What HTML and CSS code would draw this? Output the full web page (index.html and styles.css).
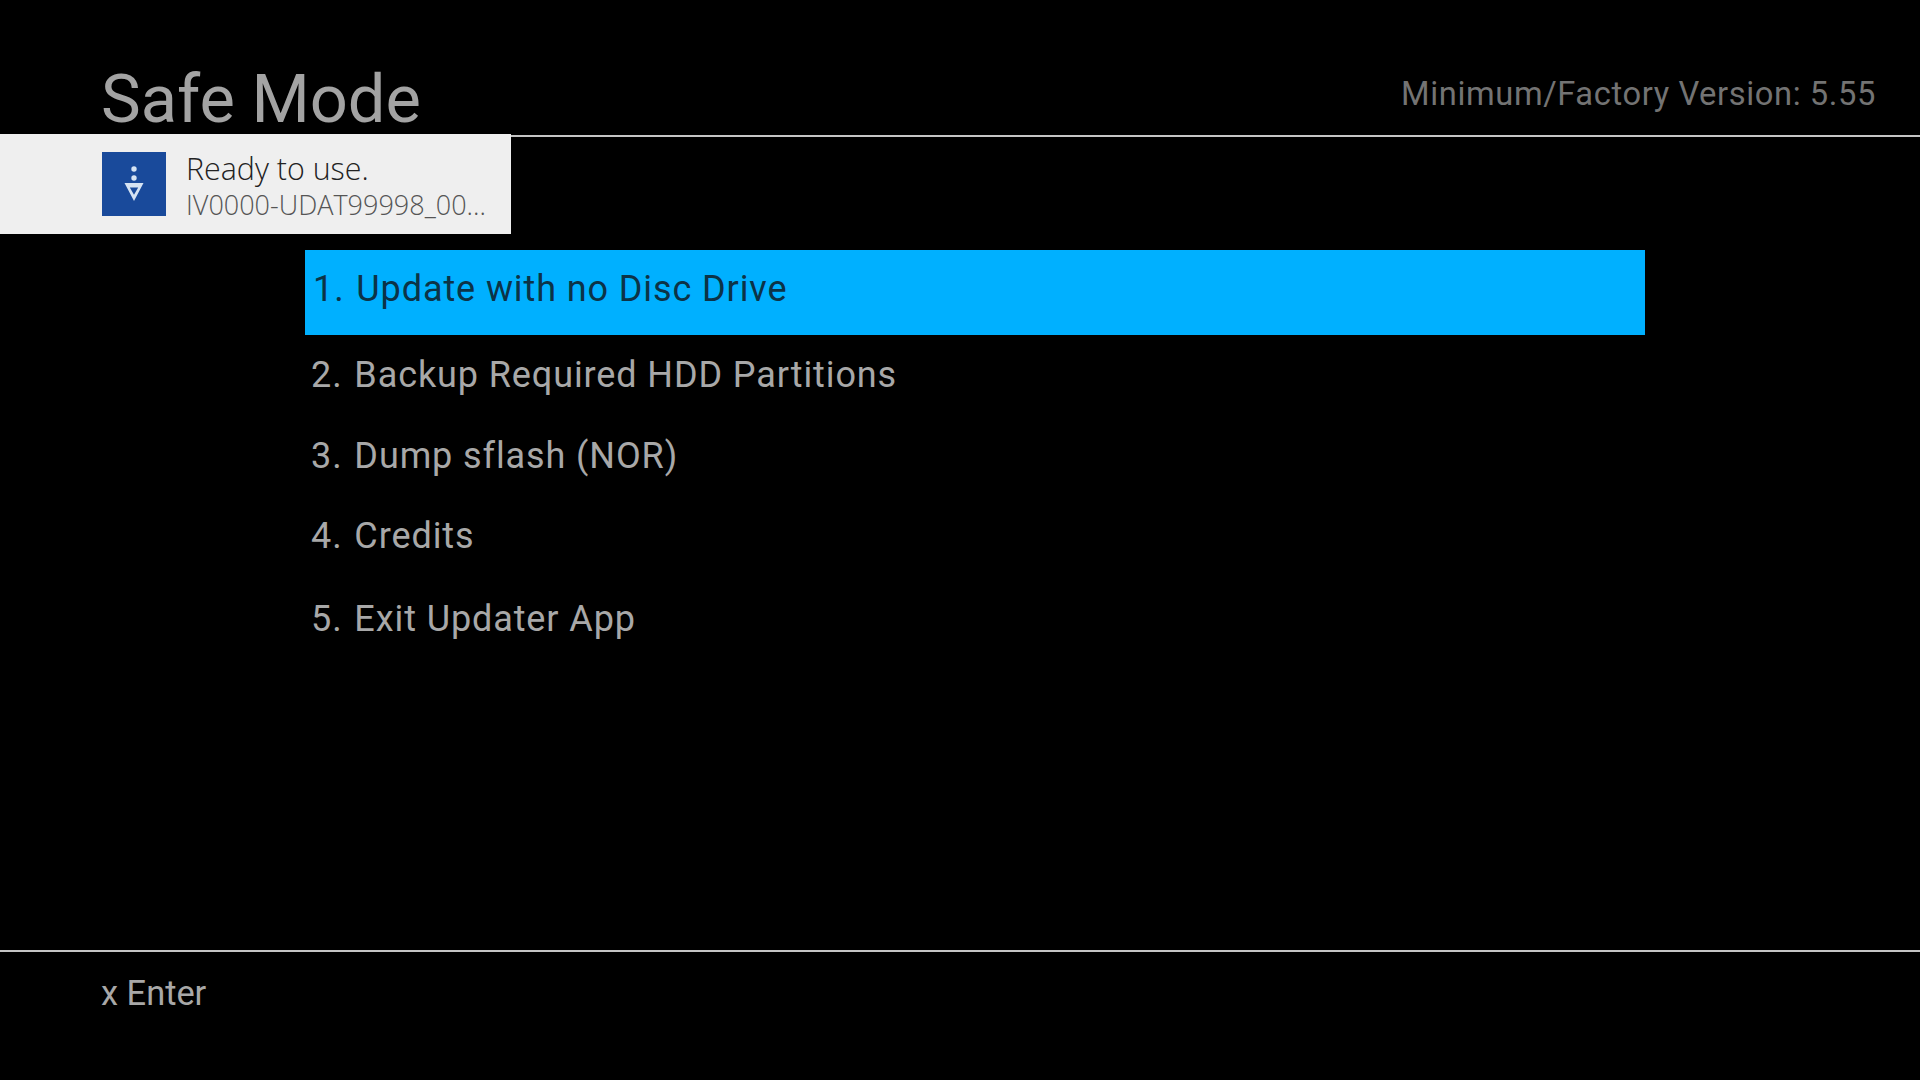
FILE: index.html
```html
<!DOCTYPE html>
<html lang="en">
  <head>
    <meta charset="utf-8">
    <title>Safe Mode</title>
    <link rel="stylesheet" href="styles.css">
  </head>
  <body>
    <div class="screen">
      <div class="header">
        <div class="title">Safe Mode</div>
        <div class="version">Minimum/Factory Version: 5.55</div>
      </div>
      <div class="notice">
        <div class="noticeicon">
          <svg width="64" height="64" viewBox="0 0 64 64">
            <circle cx="32" cy="17" r="2.7" fill="#d5e3f3"/>
            <circle cx="32" cy="26" r="2.7" fill="#d5e3f3"/>
            <path d="M22.5 31h19L32 49zM27.8 35.4h8.4L32 42.8z" fill="#d5e3f3" fill-rule="evenodd"/>
          </svg>
        </div>
        <div class="noticetext">
          <div class="noticetitle">Ready to use.</div>
          <div class="noticesub">IV0000-UDAT99998_00...</div>
        </div>
      </div>
      <div class="menu">
        <div class="item selected"><span class="num">1.</span> Update with no Disc Drive</div>
        <div class="item"><span class="num">2.</span> Backup Required HDD Partitions</div>
        <div class="item third"><span class="num">3.</span> Dump sflash (NOR)</div>
        <div class="item"><span class="num">4.</span> Credits</div>
        <div class="item last"><span class="num">5.</span> Exit Updater App</div>
      </div>
      <div class="footer">x Enter</div>
    </div>
  </body>
</html>
```

FILE: styles.css
```css
html, body {
  height: 100%;
  margin: 0;
  background: #000;
}
.screen {
  display: flex;
  flex-direction: column;
  height: 100%;
  position: relative;
  font-family: Roboto, "Liberation Sans", sans-serif;
  color: #a8a8a8;
}
.header {
  display: flex;
  justify-content: space-between;
  align-items: flex-end;
  height: 135px;
  padding: 0 44px 0 101px;
  border-bottom: 2px solid #c4c4c4;
}
.title {
  font-size: 66.8px;
  line-height: 66px;
  margin-bottom: 3px;
  color: #a3a3a3;
}
.version {
  font-size: 32.7px;
  line-height: 40px;
  margin-bottom: 21px;
  letter-spacing: 0.6px;
  color: #737373;
}
.notice {
  position: absolute;
  left: 0;
  top: 134px;
  width: 409px;
  height: 100px;
  padding-left: 102px;
  display: flex;
  align-items: center;
  background: #efefef;
}
.noticeicon {
  width: 64px;
  height: 64px;
  background: #194a9b;
}
.noticetext {
  margin-left: 20px;
  padding-top: 5px;
  font-family: "Open Sans", sans-serif;
  font-weight: 300;
}
.noticetitle {
  font-size: 30.4px;
  line-height: 36px;
  color: #222;
}
.noticesub {
  font-size: 27px;
  line-height: 36px;
  color: #555;
  white-space: nowrap;
}
.menu {
  flex: 1;
  display: flex;
  flex-direction: column;
  padding: 113px 0 0 305px;
}
.item {
  width: 1334px;
  height: 80px;
  padding-left: 6px;
  font-size: 36px;
  line-height: 80px;
  letter-spacing: 0.9px;
}
.num {
  margin-right: 2px;
}
.third {
  margin-top: 1px;
}
.last {
  margin-top: 3px;
}
.selected {
  width: 1332px;
  height: 85px;
  padding-left: 8px;
  line-height: 79px;
  background: #00b0ff;
  color: #0c3347;
}
.footer {
  height: 130px;
  padding: 21px 0 0 101px;
  box-sizing: border-box;
  border-top: 2px solid #c4c4c4;
  font-size: 34.4px;
  line-height: 40px;
}
```
